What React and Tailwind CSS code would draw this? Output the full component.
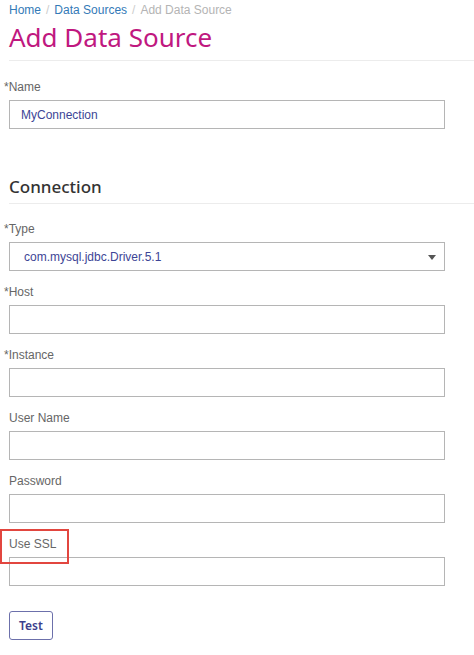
import React from 'react';

const labelCls = "block text-[12px] leading-[17px] text-[#666] mb-[4px]";
const inputCls = "block w-[436px] h-[29px] border border-[#b5b5b5] bg-white px-[11px] text-[12px] text-[#3d4596] outline-none";

const Field = ({ label, required, value, children, overlay }) => (
  <div className="mb-[13px] relative">
    <label className={labelCls}>
      {required && <span className="-ml-[5px]">*</span>}
      {label}
    </label>
    {children || <input className={inputCls} defaultValue={value} />}
    {overlay}
  </div>
);

export default function App() {
  return (
    <div className="min-h-screen bg-white pl-[9px] pt-[2px] text-[12px]" style={{ fontFamily: '"Liberation Sans", Arial, sans-serif' }}>
      {/* breadcrumb */}
      <nav className="flex leading-[17px] text-[12px]">
        <span className="text-[#337ab7]">Home</span>
        <span className="px-[5px] text-[#ccc]">/</span>
        <span className="text-[#337ab7]">Data Sources</span>
        <span className="px-[5px] text-[#ccc]">/</span>
        <span className="text-[#b4b4b4]">Add Data Source</span>
      </nav>

      <div className="border-b border-[#ececec] pb-[5px]">
        <h1 className="text-[26px] leading-[36px] text-[#c0187f] font-normal" style={{ fontFamily: '"Noto Sans", sans-serif' }}>
          Add Data Source
        </h1>
      </div>

      <div className="pt-[18px]">
        <Field label="Name" required value="MyConnection" />
      </div>

      <div className="mt-[46px] border-b border-[#ececec] pb-[4px]">
        <h2 className="text-[17px] leading-[24px] text-[#333] font-medium" style={{ fontFamily: '"Noto Sans", sans-serif' }}>
          Connection
        </h2>
      </div>

      <div className="pt-[17px]">
        <Field label="Type" required>
          <div className="relative w-[436px] h-[29px] border border-[#b5b5b5] bg-white flex items-center pl-[14px] text-[12px] text-[#3d4596]">
            com.mysql.jdbc.Driver.5.1
            <span className="absolute right-[8px] top-[12px] w-0 h-0 border-l-[4px] border-r-[4px] border-t-[5px] border-l-transparent border-r-transparent border-t-[#555]" />
          </div>
        </Field>
        <Field label="Host" required />
        <Field label="Instance" required />
        <Field label="User Name" />
        <Field label="Password" />
        <Field
          label="Use SSL"
          overlay={<div className="absolute -left-[9px] -top-[7px] w-[69px] h-[35px] border-2 border-[#e2463f] pointer-events-none" />}
        />
      </div>

      <button className="mt-[12px] w-[44px] h-[29px] border border-[#6c70ab] rounded-[3px] text-[12px] font-semibold text-[#3b3f8c] bg-white" style={{ fontFamily: '"Noto Sans", sans-serif' }}>
        Test
      </button>
    </div>
  );
}
